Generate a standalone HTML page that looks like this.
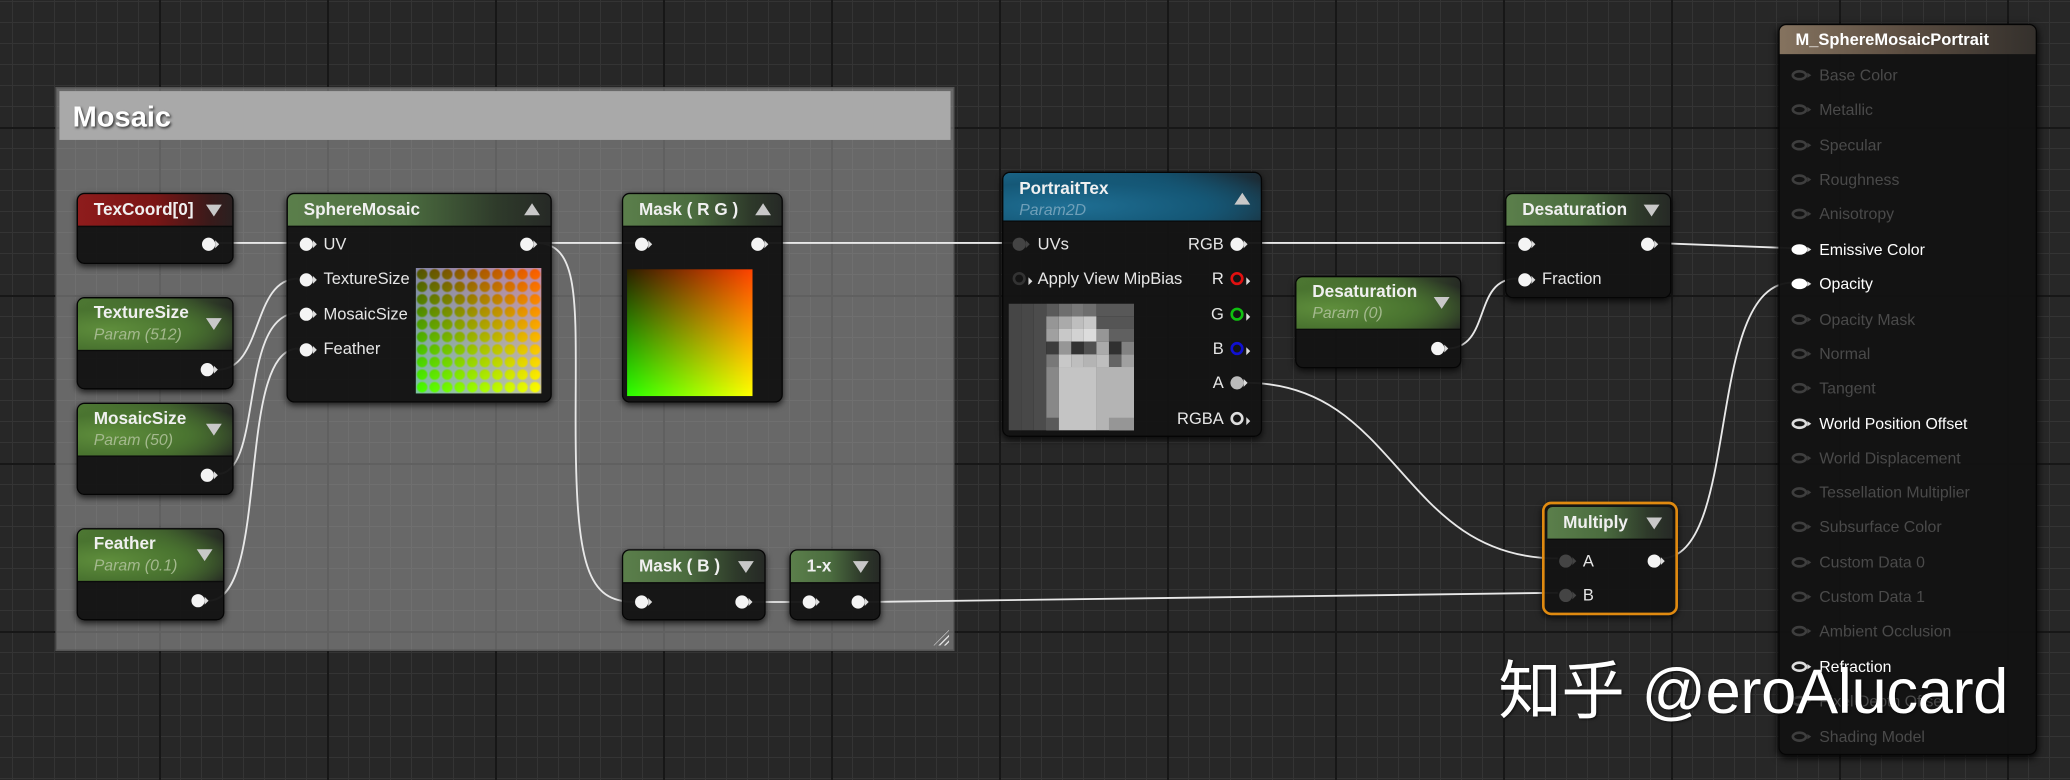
<!DOCTYPE html>
<html><head><meta charset="utf-8">
<style>
html,body{margin:0;padding:0}
body{width:2070px;height:780px;overflow:hidden;position:relative;background-color:#272727;
background-image:linear-gradient(to right,#171717 2px,transparent 2px),linear-gradient(to bottom,#171717 2px,transparent 2px),linear-gradient(to right,#343434 1px,transparent 1px),linear-gradient(to bottom,#343434 1px,transparent 1px);
background-size:168px 168px,168px 168px,21px 21px,21px 21px;
background-position:159px 0,0 127px,12px 0,0 1px;
font-family:"Liberation Sans","Noto Sans CJK SC",sans-serif;}
#w{position:absolute;left:0;top:0;width:1568px;height:591px;transform:scale(1.3202);transform-origin:0 0}
.cm{position:absolute;left:42px;top:66px;width:681px;height:427px;background:rgba(170,170,170,0.5);border:1px solid #555;box-sizing:border-box}
.cmh{position:absolute;left:2px;top:2px;right:2px;height:37px;background:#a9a9a9;color:#fff;font-weight:bold;font-size:22px;line-height:40px;padding-left:10px;text-shadow:1px 1px 2px #333}
.rz{position:absolute;right:3px;bottom:3px;width:12px;height:12px;background:repeating-linear-gradient(135deg,transparent 0 2px,#ddd 2px 3px);clip-path:polygon(100% 0,100% 100%,0 100%)}
.n{position:absolute;background:rgba(20,20,20,0.96);border:1px solid #050505;border-radius:6px;box-shadow:0 2px 5px rgba(0,0,0,.7);color:#e6e6e6;font-size:12.5px;overflow:hidden}
.h{position:relative;height:24px;line-height:24px;padding-left:12px;font-weight:bold;font-size:13px;color:#f0f0f0;border-bottom:1px solid #0b0b0b}
.g{background:linear-gradient(to right,#5b7f4b,#4b6c3f 45%,#2e3a2a 80%,#262926)}
.gp{background:radial-gradient(ellipse at 20% 60%,#5f8e3c 0,#4a7430 45%,transparent 85%),linear-gradient(to right,#4f7a34,#3d5a2c 60%,#262a24)}
.r{background:linear-gradient(to right,#8e1c1c,#7a1515 50%,#3a1a1a 85%,#2a2020)}
.b{background:radial-gradient(ellipse at 25% 70%,#1f6f94 0,#155877 50%,transparent 90%),linear-gradient(to right,#1d6a8e,#134d69 60%,#1c2a33)}
.tall{height:40px;line-height:normal;padding-top:3px;box-sizing:border-box}
.sub{display:block;font-weight:normal;font-style:italic;font-size:12px;color:#a4b98e;margin-top:2px}
.tri{position:absolute;right:8px;top:8px;width:0;height:0;border-left:6px solid transparent;border-right:6px solid transparent;border-top:9px solid #c8c8c8}
.up{border-top:0;border-bottom:9px solid #c8c8c8;top:7px}
.p{position:absolute;width:10px;height:10px;border-radius:50%;background:#f4f4f4;box-sizing:border-box}
.p:after{content:"";position:absolute;left:10px;top:2px;border-top:3px solid transparent;border-bottom:3px solid transparent;border-left:3px solid #ddd}
.ho{background:transparent;border:2px solid #ddd}
.dim{background:#444}.dim:after{border-left-color:#444}
.l{position:absolute;white-space:nowrap}
svg{position:absolute;left:0;top:0}
.out{position:absolute;left:1347px;top:18px;width:194px;height:552px;background:rgba(19,19,19,.97);border:1px solid #050505;border-radius:6px;box-shadow:0 2px 6px #000;overflow:hidden}
.oh{height:22px;line-height:22px;background:linear-gradient(to right,#85735f,#5a4c40 50%,#34302c);color:#fff;font-weight:bold;font-size:12.5px;padding-left:12px}
.or{position:absolute;left:30px;font-size:12px;color:#4a4a4a;white-space:nowrap}
.or.a{color:#fff}
.op{position:absolute;left:9px;width:12px;height:8px;border-radius:50%;border:2px solid #3e3e3e;box-sizing:border-box}
.op:after{content:"";position:absolute;left:10px;top:0px;border-top:2.5px solid transparent;border-bottom:2.5px solid transparent;border-left:3px solid #3e3e3e}
.op.a{background:#fff;border-color:#fff}
.op.a:after,.op.ah:after{border-left-color:#ddd}
.op.ah{border-color:#ddd}
</style></head><body>
<div id="w">
<div class="cm"><div class="cmh">Mosaic</div><div class="rz"></div></div>

<svg width="1568" height="591" fill="none" stroke="#e8e8e8" stroke-width="1.4">
<path d="M165,184 L226,184"/>
<path d="M165,280 C200,280 190,211 226,211"/>
<path d="M165,359 C200,359 180,237 226,237"/>
<path d="M158,455 C205,455 178,264 226,264"/>
<path d="M406,184 L481,184"/>
<path d="M406,184 C440,184 436,230 436,320 C436,430 445,456 481,456"/>
<path d="M580,184 L767,184"/>
<path d="M570,456 L608,456"/>
<path d="M656,456 L1180,449"/>
<path d="M944,184 L1149,184"/>
<path d="M1096,264 C1130,264 1115,211 1149,211"/>
<path d="M944,290 C1060,290 1060,423 1180,423"/>
<path d="M1253,184 L1358,188"/>
<path d="M1258,423 C1320,423 1290,214 1358,214"/>
</svg>

<div class="n" style="left:58px;top:146px;width:117px;height:52px">
<div class="h r">TexCoord[0]<div class="tri"></div></div>
<span class="p" style="left:94px;top:33px"></span></div>
<div class="n" style="left:58px;top:225px;width:117px;height:68px">
<div class="h gp tall">TextureSize<span class="sub">Param (512)</span><div class="tri" style="top:15px"></div></div>
<span class="p" style="left:93px;top:49px"></span></div>
<div class="n" style="left:58px;top:305px;width:117px;height:68px">
<div class="h gp tall">MosaicSize<span class="sub">Param (50)</span><div class="tri" style="top:15px"></div></div>
<span class="p" style="left:93px;top:49px"></span></div>
<div class="n" style="left:58px;top:400px;width:110px;height:68px">
<div class="h gp tall">Feather<span class="sub">Param (0.1)</span><div class="tri" style="top:15px"></div></div>
<span class="p" style="left:86px;top:49px"></span></div>

<div class="n" style="left:217px;top:146px;width:199px;height:157px">
<div class="h g">SphereMosaic<div class="tri up"></div></div>
<span class="p" style="left:9px;top:33px"></span><span class="l" style="left:27px;top:31px">UV</span>
<span class="p" style="left:176px;top:33px"></span>
<span class="p" style="left:9px;top:60px"></span><span class="l" style="left:27px;top:57px">TextureSize</span>
<span class="p" style="left:9px;top:86px"></span><span class="l" style="left:27px;top:84px">MosaicSize</span>
<span class="p" style="left:9px;top:113px"></span><span class="l" style="left:27px;top:110px">Feather</span>
<div style="position:absolute;left:97px;top:56px;width:95px;height:95px;background-image:radial-gradient(circle,transparent 3.3px,rgba(160,160,255,.65) 4.6px),linear-gradient(to right,rgba(0,0,0,0),#ff1000),linear-gradient(to bottom,#505000,#40ff00);background-size:9.5px 9.5px,100% 100%,100% 100%;background-blend-mode:normal,screen,normal"></div>
</div>

<div class="n" style="left:471px;top:146px;width:120px;height:157px">
<div class="h g">Mask ( R G )<div class="tri up"></div></div>
<span class="p" style="left:9px;top:33px"></span><span class="p" style="left:97px;top:33px"></span>
<div style="position:absolute;left:3px;top:57px;width:95px;height:96px;background-image:linear-gradient(to right,rgba(0,0,0,0),#ff2800),linear-gradient(to bottom,#2a2000,#28ff00);background-blend-mode:screen"></div>
</div>

<div class="n" style="left:471px;top:416px;width:107px;height:52px">
<div class="h g">Mask ( B )<div class="tri"></div></div>
<span class="p" style="left:9px;top:34px"></span><span class="p" style="left:85px;top:34px"></span></div>
<div class="n" style="left:598px;top:416px;width:67px;height:52px">
<div class="h g">1-x<div class="tri"></div></div>
<span class="p" style="left:9px;top:34px"></span><span class="p" style="left:46px;top:34px"></span></div>

<div class="n" style="left:759px;top:130px;width:195px;height:199px">
<div class="h b" style="height:37px;line-height:normal;padding-top:4px;box-sizing:border-box">PortraitTex<span class="sub" style="color:#6f9fb8">Param2D</span><div class="tri up" style="top:15px"></div></div>
<span class="p dim" style="left:7px;top:49px"></span><span class="l" style="left:26px;top:47px">UVs</span>
<span class="l" style="right:28px;top:47px">RGB</span><span class="p" style="left:172px;top:49px"></span>
<span class="p ho" style="left:7px;top:75px;border-color:#333"></span><span class="l" style="left:26px;top:73px">Apply View MipBias</span>
<span class="l" style="right:28px;top:73px">R</span><span class="p ho" style="left:172px;top:75px;border-color:#e01010"></span>
<span class="l" style="right:28px;top:100px">G</span><span class="p ho" style="left:172px;top:102px;border-color:#10c010"></span>
<span class="l" style="right:28px;top:126px">B</span><span class="p ho" style="left:172px;top:128px;border-color:#1010d0"></span>
<span class="l" style="right:28px;top:152px">A</span><span class="p" style="left:172px;top:154px;background:#bbb"></span>
<span class="l" style="right:28px;top:179px">RGBA</span><span class="p ho" style="left:172px;top:181px"></span>
<svg style="left:4px;top:99px" width="95" height="96" viewBox="0 0 10 10" preserveAspectRatio="none">
<rect x="0" y="0" width="1" height="10" fill="#464646"/><rect x="1" y="0" width="1" height="10" fill="#484848"/><rect x="2" y="0" width="1" height="10" fill="#4c4c4c"/>
<rect x="3" y="0" width="1" height="1" fill="#5a5a5a"/><rect x="4" y="0" width="1" height="1" fill="#6e6e6e"/><rect x="5" y="0" width="1" height="1" fill="#787878"/><rect x="6" y="0" width="1" height="1" fill="#6e6e6e"/><rect x="7" y="0" width="3" height="1" fill="#585858"/>
<rect x="3" y="1" width="1" height="1" fill="#969696"/><rect x="4" y="1" width="1" height="1" fill="#aaa"/><rect x="5" y="1" width="1" height="1" fill="#bebebe"/><rect x="6" y="1" width="1" height="1" fill="#c8c8c8"/><rect x="7" y="1" width="3" height="1" fill="#555"/>
<rect x="3" y="2" width="1" height="1" fill="#a0a0a0"/><rect x="4" y="2" width="1" height="1" fill="#c8c8c8"/><rect x="5" y="2" width="1" height="1" fill="#d2d2d2"/><rect x="6" y="2" width="1" height="1" fill="#dcdcdc"/><rect x="7" y="2" width="1" height="1" fill="#969696"/><rect x="8" y="2" width="2" height="1" fill="#606060"/>
<rect x="3" y="3" width="1" height="1" fill="#3c3c3c"/><rect x="4" y="3" width="1" height="1" fill="#969696"/><rect x="5" y="3" width="1" height="1" fill="#323232"/><rect x="6" y="3" width="1" height="1" fill="#505050"/><rect x="7" y="3" width="1" height="1" fill="#aaa"/><rect x="8" y="3" width="1" height="1" fill="#303030"/><rect x="9" y="3" width="1" height="1" fill="#828282"/>
<rect x="3" y="4" width="1" height="1" fill="#787878"/><rect x="4" y="4" width="1" height="1" fill="#c8c8c8"/><rect x="5" y="4" width="1" height="1" fill="#bebebe"/><rect x="6" y="4" width="1" height="1" fill="#b4b4b4"/><rect x="7" y="4" width="1" height="1" fill="#bebebe"/><rect x="8" y="4" width="1" height="1" fill="#646464"/><rect x="9" y="4" width="1" height="1" fill="#a0a0a0"/>
<rect x="3" y="5" width="1" height="5" fill="#888"/><rect x="4" y="5" width="3" height="5" fill="#c4c4c4"/><rect x="7" y="5" width="3" height="5" fill="#b4b4b4"/>
<rect x="3" y="9" width="1" height="1" fill="#5a5a5a"/><rect x="8" y="9" width="2" height="1" fill="#969696"/>
</svg>
</div>

<div class="n" style="left:981px;top:209px;width:124px;height:68px">
<div class="h gp tall">Desaturation<span class="sub">Param (0)</span><div class="tri" style="top:15px"></div></div>
<span class="p" style="left:102px;top:49px"></span></div>
<div class="n" style="left:1140px;top:146px;width:124px;height:78px">
<div class="h g">Desaturation<div class="tri"></div></div>
<span class="p" style="left:9px;top:33px"></span><span class="p" style="left:102px;top:33px"></span>
<span class="p" style="left:9px;top:60px"></span><span class="l" style="left:27px;top:57px">Fraction</span></div>
<div class="n" style="left:1168px;top:380px;width:99px;height:82px;border:2px solid #e08a10;border-radius:7px">
<div class="h g" style="margin:2px 2px 0 2px;border-radius:4px 4px 0 0">Multiply<div class="tri"></div></div>
<span class="p dim" style="left:11px;top:38px"></span><span class="l" style="left:29px;top:36px">A</span>
<span class="p" style="left:78px;top:38px"></span>
<span class="p dim" style="left:11px;top:64px"></span><span class="l" style="left:29px;top:62px">B</span></div>

<div class="out"><div class="oh">M_SphereMosaicPortrait</div>
<span class="op" style="top:34px"></span><span class="or" style="top:31px">Base Color</span>
<span class="op" style="top:60px"></span><span class="or" style="top:57px">Metallic</span>
<span class="op" style="top:87px"></span><span class="or" style="top:84px">Specular</span>
<span class="op" style="top:113px"></span><span class="or" style="top:110px">Roughness</span>
<span class="op" style="top:139px"></span><span class="or" style="top:136px">Anisotropy</span>
<span class="op a" style="top:166px"></span><span class="or a" style="top:163px">Emissive Color</span>
<span class="op a" style="top:192px"></span><span class="or a" style="top:189px">Opacity</span>
<span class="op" style="top:219px"></span><span class="or" style="top:216px">Opacity Mask</span>
<span class="op" style="top:245px"></span><span class="or" style="top:242px">Normal</span>
<span class="op" style="top:271px"></span><span class="or" style="top:268px">Tangent</span>
<span class="op ah" style="top:298px"></span><span class="or a" style="top:295px">World Position Offset</span>
<span class="op" style="top:324px"></span><span class="or" style="top:321px">World Displacement</span>
<span class="op" style="top:350px"></span><span class="or" style="top:347px">Tessellation Multiplier</span>
<span class="op" style="top:376px"></span><span class="or" style="top:373px">Subsurface Color</span>
<span class="op" style="top:403px"></span><span class="or" style="top:400px">Custom Data 0</span>
<span class="op" style="top:429px"></span><span class="or" style="top:426px">Custom Data 1</span>
<span class="op" style="top:455px"></span><span class="or" style="top:452px">Ambient Occlusion</span>
<span class="op ah" style="top:482px"></span><span class="or a" style="top:479px">Refraction</span>
<span class="op" style="top:508px"></span><span class="or" style="top:505px">Pixel Depth Offset</span>
<span class="op" style="top:535px"></span><span class="or" style="top:532px">Shading Model</span>
</div>

<div style="position:absolute;left:1135px;top:493px;font-size:48px;letter-spacing:-0.3px;line-height:64px;color:#fff;white-space:nowrap;text-shadow:1px 1px 2px rgba(0,0,0,.6);font-family:'Liberation Sans','Noto Sans CJK SC',sans-serif">知乎 @eroAlucard</div>
</div>
</body></html>
